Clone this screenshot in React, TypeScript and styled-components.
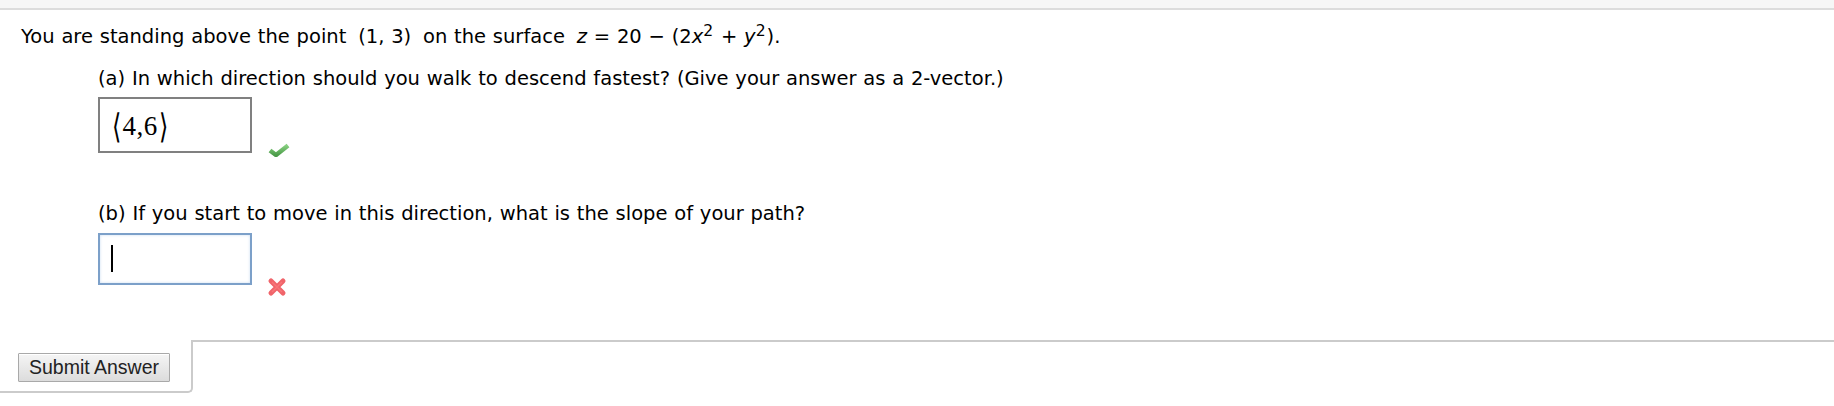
import React from 'react'
import styled, { createGlobalStyle } from 'styled-components'

const GlobalStyle = createGlobalStyle`
  html, body {
    margin: 0;
    padding: 0;
    background: #ffffff;
  }
  body {
    font-family: "DejaVu Sans", Verdana, sans-serif;
    color: #000;
  }
`

const TopBar = styled('div')`
  height: 8px;
  background-color: #f6f6f6;
  border-bottom: 2px solid #dcdcdc;
`

const StyledQuestion = styled('section')`
  padding: 15px 0 0 21px;
  font-size: 19.5px;
  line-height: 23px;
  word-spacing: 0.6px;
`

const StyledPrompt = styled('p')`
  margin: 0;
  white-space: nowrap;
`

const StyledMath = styled('span')<{ padEnd?: boolean }>`
  padding: 0 ${p => (p.padEnd ? '5px' : '0')} 0 5px;
  white-space: nowrap;
`

const Var = styled('i')`
  font-style: italic;
`

const Sup = styled('sup')`
  font-size: 0.8em;
  line-height: 0;
  vertical-align: 0.45em;
  padding-right: 1px;
`

const StyledPart = styled('div')<{ gap: number }>`
  margin-left: 77px;
  margin-top: ${p => p.gap}px;
`

const StyledPartLabel = styled('p')`
  margin: 0;
  white-space: nowrap;
`

const StyledAnswerRow = styled('div')<{ gap: number }>`
  display: flex;
  align-items: flex-end;
  gap: 15px;
  margin-top: ${p => p.gap}px;
`

const StyledAnswerBox = styled('div')<{ focused?: boolean; boxHeight: number }>`
  box-sizing: border-box;
  width: 154px;
  height: ${p => p.boxHeight}px;
  display: flex;
  align-items: center;
  padding: 2px 0 0 11px;
  background: #fff;
  border: 2px solid ${p => (p.focused ? '#7ca0c9' : '#808080')};
  box-shadow: ${p => (p.focused ? 'inset 0 0 3px #c9dcf1' : 'none')};
`

const StyledMathAnswer = styled('span')`
  font-family: "Liberation Serif", "Times New Roman", serif;
  font-size: 27px;
  line-height: 1;
  display: flex;
  align-items: center;
  word-spacing: 0;
  letter-spacing: 0.5px;
`

const Bracket = styled('span')`
  font-family: "DejaVu Sans", sans-serif;
  font-size: 34px;
  font-weight: 200;
  transform: scaleX(0.7);
  margin: -1px -1px 0;
`

const Caret = styled('span')`
  display: block;
  width: 2px;
  height: 27px;
  margin-left: 0;
  margin-top: -3px;
  background: #000;
`

const StyledMark = styled('span')<{ drop: number }>`
  display: flex;
  margin-bottom: -${p => p.drop}px;
`

const StyledFooter = styled('div')`
  display: flex;
  margin-top: 55px;
`

const StyledSubmitCell = styled('div')`
  box-sizing: border-box;
  width: 193px;
  height: 53px;
  padding: 13px 0 0 18px;
  border-right: 2px solid #cbcbcb;
  border-bottom: 2px solid #cbcbcb;
  border-bottom-right-radius: 5px;
`

const StyledFooterRest = styled('div')`
  flex: 1;
  border-top: 2px solid #cbcbcb;
`

const StyledSubmit = styled('button')`
  box-sizing: border-box;
  width: 152px;
  height: 29px;
  padding: 0;
  font-family: "Liberation Sans", Arial, sans-serif;
  font-size: 19.5px;
  color: #222;
  background: linear-gradient(#f5f5f5, #dcdcdc);
  border: 1px solid #a9a9a9;
  border-radius: 1px;
  box-shadow: inset 0 1px 0 #fff;
`

const CheckMark = () => (
  <svg width="24" height="14" viewBox="0 0 24 14">
    <defs>
      <linearGradient id="ok" x1="0" y1="0" x2="0" y2="1">
        <stop offset="0" stopColor="#86cf7f" />
        <stop offset="1" stopColor="#4c9c4a" />
      </linearGradient>
    </defs>
    <path d="M3 7.5 L9 12 L21 2.5" fill="none" stroke="url(#ok)" strokeWidth="4.5" strokeLinejoin="round" />
  </svg>
)

const CrossMark = () => (
  <svg width="20" height="20" viewBox="0 0 20 20">
    <path d="M4 4 L16 16 M16 4 L4 16" fill="none" stroke="#f0646a" strokeWidth="5" strokeLinecap="round" />
    <path d="M5 5 L15 15 M15 5 L5 15" fill="none" stroke="#f88" strokeWidth="1.5" opacity="0.5" />
  </svg>
)

const App = () => {
  return (
    <>
      <GlobalStyle />
      <TopBar />
      <StyledQuestion>
        <StyledPrompt>
          You are standing above the point <StyledMath padEnd>(1, 3)</StyledMath> on the surface{' '}
          <StyledMath>
            <Var>z</Var> = 20 − (2<Var>x</Var><Sup>2</Sup> + <Var>y</Var><Sup>2</Sup>)
          </StyledMath>
          .
        </StyledPrompt>

        <StyledPart gap={19}>
          <StyledPartLabel>
            (a) In which direction should you walk to descend fastest? (Give your answer as a 2-vector.)
          </StyledPartLabel>
          <StyledAnswerRow gap={7}>
            <StyledAnswerBox boxHeight={56}>
              <StyledMathAnswer>
                <Bracket>⟨</Bracket>4,6<Bracket>⟩</Bracket>
              </StyledMathAnswer>
            </StyledAnswerBox>
            <StyledMark drop={4}>
              <CheckMark />
            </StyledMark>
          </StyledAnswerRow>
        </StyledPart>

        <StyledPart gap={49}>
          <StyledPartLabel>
            (b) If you start to move in this direction, what is the slope of your path?
          </StyledPartLabel>
          <StyledAnswerRow gap={8}>
            <StyledAnswerBox boxHeight={52} focused>
              <Caret />
            </StyledAnswerBox>
            <StyledMark drop={12}>
              <CrossMark />
            </StyledMark>
          </StyledAnswerRow>
        </StyledPart>
      </StyledQuestion>

      <StyledFooter>
        <StyledSubmitCell>
          <StyledSubmit type="button">Submit Answer</StyledSubmit>
        </StyledSubmitCell>
        <StyledFooterRest />
      </StyledFooter>
    </>
  )
}

export default App
